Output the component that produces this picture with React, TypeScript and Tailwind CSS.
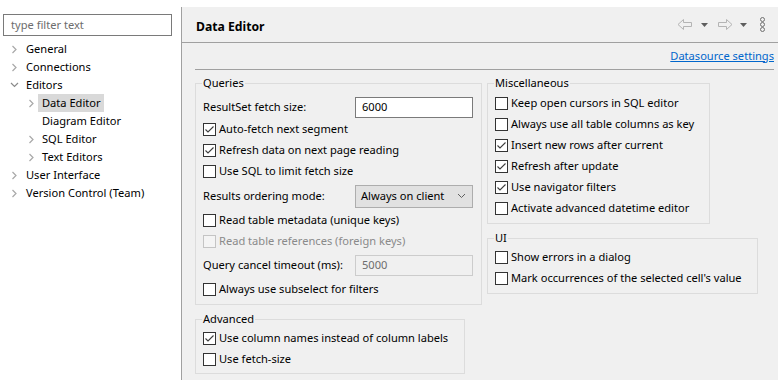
import React from "react";

const FONT = { fontFamily: '"Noto Sans", "Segoe UI", sans-serif' };

function Chevron({ open }: { open?: boolean }) {
  if (open) {
    return (
      <svg width="9" height="6" viewBox="0 0 9 6" className="block">
        <path d="M1 1 L4.5 4.5 L8 1" stroke="#8a8a8a" strokeWidth="1.2" fill="none" />
      </svg>
    );
  }
  return (
    <svg width="6" height="9" viewBox="0 0 6 9" className="block">
      <path d="M1.5 1 L5 4.5 L1.5 8" stroke="#a8a8a8" strokeWidth="1.2" fill="none" />
    </svg>
  );
}

function TreeItem({
  label,
  level,
  chevron,
  open,
  selected,
}: {
  label: string;
  level: number;
  chevron?: boolean;
  open?: boolean;
  selected?: boolean;
}) {
  return (
    <div className={`flex items-center h-[18px] whitespace-nowrap ${level === 0 ? "pl-[8px]" : "pl-[25px]"}`}>
      <div className="w-[12px] flex items-center justify-center">{chevron && <Chevron open={open} />}</div>
      <span
        className={`leading-[18px] ${
          selected ? "bg-[#d9d9d9] ml-[1px] pl-[4px] pr-[3px]" : level === 0 ? "ml-[6px]" : "ml-[5px]"
        }`}
      >
        {label}
      </span>
    </div>
  );
}

function CheckBox({ checked, disabled, label }: { checked?: boolean; disabled?: boolean; label: string }) {
  return (
    <div className="flex items-center h-[21px] whitespace-nowrap">
      <span
        className={`w-[13px] h-[13px] border flex items-center justify-center shrink-0 ${
          disabled ? "border-[#c4c4c4] bg-[#f4f4f4]" : "border-[#333333] bg-white"
        }`}
      >
        {checked && (
          <svg width="11" height="11" viewBox="0 0 11 11" className="block">
            <path d="M1.5 5.5 L4 8 L9.5 2.5" stroke="#3c3c3c" strokeWidth="1.1" fill="none" />
          </svg>
        )}
      </span>
      <span className={`ml-[3px] ${disabled ? "text-[#8a8a8a]" : "text-black"}`}>{label}</span>
    </div>
  );
}

function Group({
  title,
  className,
  children,
}: {
  title: string;
  className?: string;
  children: React.ReactNode;
}) {
  return (
    <fieldset className={`border border-[#dcdcdc] pl-[7px] pr-[8px] ${className ?? ""}`}>
      <legend className="px-[1px] -ml-[1px] leading-[16px] text-black">{title}</legend>
      {children}
    </fieldset>
  );
}

export default function App() {
  return (
    <div className="w-[778px] h-[380px] bg-white flex text-[11.1px] text-black overflow-hidden" style={FONT}>
      {/* Left panel */}
      <div className="w-[181px] shrink-0 bg-white">
        <div className="mt-[14px] ml-[3px] w-[169px] h-[22px] border border-[#7a7a7a] flex items-center pl-[7px] text-[#6d6d6d]">
          type filter text
        </div>
        <div className="mt-[4px]">
          <TreeItem label="General" level={0} chevron />
          <TreeItem label="Connections" level={0} chevron />
          <TreeItem label="Editors" level={0} chevron open />
          <TreeItem label="Data Editor" level={1} chevron selected />
          <TreeItem label="Diagram Editor" level={1} />
          <TreeItem label="SQL Editor" level={1} chevron />
          <TreeItem label="Text Editors" level={1} chevron />
          <TreeItem label="User Interface" level={0} chevron />
          <TreeItem label="Version Control (Team)" level={0} chevron />
        </div>
      </div>

      {/* Main area */}
      <div className="flex-1 mt-[7px] bg-[#f0f0f0] border-l border-[#a0a0a0] flex flex-col">
        <div className="h-[36px] shrink-0 border-b border-[#a0a0a0] flex items-center pl-[14px] pr-[12px]">
          <span className="font-bold text-[12.2px] mt-[5px]">Data Editor</span>
          <div className="ml-auto flex items-center">
            <svg width="16" height="13" viewBox="0 0 16 13" className="block">
              <path d="M1 6.5 L6.5 1.5 V4.5 H14.5 V8.5 H6.5 V11.5 Z" stroke="#b4b4b4" strokeWidth="1" fill="none" />
            </svg>
            <svg width="7" height="4" viewBox="0 0 7 4" className="block ml-[8px]">
              <path d="M0 0 H7 L3.5 4 Z" fill="#5e5e5e" />
            </svg>
            <svg width="16" height="13" viewBox="0 0 16 13" className="block ml-[9px]">
              <path d="M15 6.5 L9.5 1.5 V4.5 H1.5 V8.5 H9.5 V11.5 Z" stroke="#b4b4b4" strokeWidth="1" fill="none" />
            </svg>
            <svg width="7" height="4" viewBox="0 0 7 4" className="block ml-[7px]">
              <path d="M0 0 H7 L3.5 4 Z" fill="#5e5e5e" />
            </svg>
            <svg width="7" height="15" viewBox="0 0 7 15" className="block ml-[12px]">
              <circle cx="3.5" cy="2.5" r="2" stroke="#707070" strokeWidth="1" fill="none" />
              <circle cx="3.5" cy="7.5" r="2" stroke="#707070" strokeWidth="1" fill="none" />
              <circle cx="3.5" cy="12.5" r="2" stroke="#707070" strokeWidth="1" fill="none" />
            </svg>
          </div>
        </div>

        <div className="pl-[13px] pr-[4px]">
          <div className="h-[27px] border-b border-[#a0a0a0] flex items-center justify-end">
            <span className="text-[#0066cc] underline">Datasource settings</span>
          </div>

          <div className="mt-[5px] flex gap-[5px] items-start">
            {/* Left column */}
            <div className="flex flex-col gap-[6px]">
              <Group title="Queries" className="w-[287px] pt-[4px] pb-[4px]">
                <div className="flex items-center h-[24px] whitespace-nowrap">
                  <span>ResultSet fetch size:</span>
                  <div className="ml-auto w-[118px] h-[21px] bg-white border border-[#7a7a7a] flex items-center pl-[6px]">
                    6000
                  </div>
                </div>
                <CheckBox checked label="Auto-fetch next segment" />
                <CheckBox checked label="Refresh data on next page reading" />
                <CheckBox label="Use SQL to limit fetch size" />
                <div className="flex items-center h-[28px] whitespace-nowrap">
                  <span>Results ordering mode:</span>
                  <div className="ml-auto w-[118px] h-[23px] bg-[#e1e1e1] border border-[#adadad] flex items-center pl-[5px] pr-[6px]">
                    <span>Always on client</span>
                    <svg width="9" height="6" viewBox="0 0 9 6" className="block ml-auto">
                      <path d="M1 1 L4.5 4.5 L8 1" stroke="#606060" strokeWidth="1" fill="none" />
                    </svg>
                  </div>
                </div>
                <CheckBox label="Read table metadata (unique keys)" />
                <CheckBox disabled label="Read table references (foreign keys)" />
                <div className="flex items-center h-[27px] whitespace-nowrap">
                  <span>Query cancel timeout (ms):</span>
                  <div className="ml-auto w-[118px] h-[21px] bg-[#f0f0f0] border border-[#cccccc] flex items-center pl-[6px] text-[#6d6d6d]">
                    5000
                  </div>
                </div>
                <CheckBox label="Always use subselect for filters" />
              </Group>

              <Group title="Advanced" className="w-[270px] pt-[1px] pb-[3px]">
                <CheckBox checked label="Use column names instead of column labels" />
                <CheckBox label="Use fetch-size" />
              </Group>
            </div>

            {/* Right column */}
            <div className="flex flex-col gap-[6px]">
              <Group title="Miscellaneous" className="w-[223px] pt-[2px] pb-[4px]">
                <CheckBox label="Keep open cursors in SQL editor" />
                <CheckBox label="Always use all table columns as key" />
                <CheckBox checked label="Insert new rows after current" />
                <CheckBox checked label="Refresh after update" />
                <CheckBox checked label="Use navigator filters" />
                <CheckBox label="Activate advanced datetime editor" />
              </Group>
              <Group title="UI" className="w-[271px] pt-[1px] pb-[4px]">
                <CheckBox label="Show errors in a dialog" />
                <CheckBox label="Mark occurrences of the selected cell's value" />
              </Group>
            </div>
          </div>
        </div>
      </div>
    </div>
  );
}
